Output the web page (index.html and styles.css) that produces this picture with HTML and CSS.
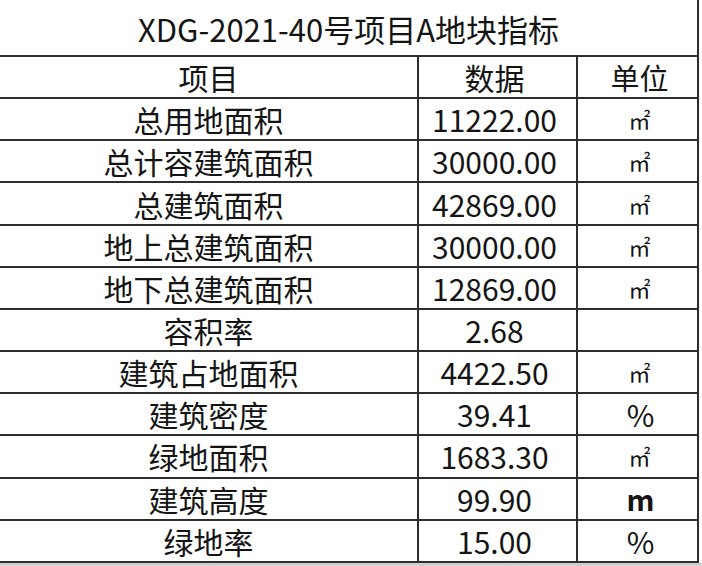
FILE: index.html
```html
<!DOCTYPE html>
<html lang="zh-CN">
<head>
<meta charset="utf-8">
<title>XDG-2021-40号项目A地块指标</title>
<link rel="stylesheet" href="styles.css">
</head>
<body>
<div class="sheet">
  <div class="cell title">XDG-2021-40号项目A地块指标</div>

  <div class="cell label">项目</div>
  <div class="cell num head">数据</div>
  <div class="cell unit head">单位</div>

  <div class="cell label">总用地面积</div>
  <div class="cell num">11222.00</div>
  <div class="cell unit"><span class="sqm">㎡</span></div>

  <div class="cell label">总计容建筑面积</div>
  <div class="cell num">30000.00</div>
  <div class="cell unit"><span class="sqm">㎡</span></div>

  <div class="cell label">总建筑面积</div>
  <div class="cell num">42869.00</div>
  <div class="cell unit"><span class="sqm">㎡</span></div>

  <div class="cell label">地上总建筑面积</div>
  <div class="cell num">30000.00</div>
  <div class="cell unit"><span class="sqm">㎡</span></div>

  <div class="cell label">地下总建筑面积</div>
  <div class="cell num">12869.00</div>
  <div class="cell unit"><span class="sqm">㎡</span></div>

  <div class="cell label">容积率</div>
  <div class="cell num">2.68</div>
  <div class="cell unit"></div>

  <div class="cell label">建筑占地面积</div>
  <div class="cell num">4422.50</div>
  <div class="cell unit"><span class="sqm">㎡</span></div>

  <div class="cell label">建筑密度</div>
  <div class="cell num">39.41</div>
  <div class="cell unit pct">%</div>

  <div class="cell label">绿地面积</div>
  <div class="cell num">1683.30</div>
  <div class="cell unit"><span class="sqm">㎡</span></div>

  <div class="cell label">建筑高度</div>
  <div class="cell num">99.90</div>
  <div class="cell unit bold">m</div>

  <div class="cell label">绿地率</div>
  <div class="cell num">15.00</div>
  <div class="cell unit pct">%</div>
</div>
<div class="strip"></div>
</body>
</html>
```

FILE: styles.css
```css
html, body {
  margin: 0;
  padding: 0;
  background: #ffffff;
}

body {
  width: 702px;
  height: 566px;
  overflow: hidden;
  font-family: "Noto Sans CJK SC", "Noto Sans", sans-serif;
  color: #141414;
}

.sheet {
  display: grid;
  grid-template-columns: 419px 159px 121px;
  grid-template-rows: 57px repeat(12, 42.17px);
  width: 699px;
}

.cell {
  display: flex;
  align-items: center;
  justify-content: center;
  border-bottom: 2px solid #2e2e2e;
  border-right: 2px solid #2e2e2e;
  font-size: 30px;
  line-height: 1;
  white-space: nowrap;
}

.title {
  grid-column: 1 / 4;
  font-size: 31px;
  padding-top: 2px;
}

.label {
  font-size: 30px;
}

.num {
  font-size: 30px;
  padding-right: 6px;
}

.unit {
  font-size: 29px;
  padding-left: 4px;
}

.pct {
  font-size: 30px;
  padding-left: 6px;
}

.sqm {
  font-size: 22px;
}

.bold {
  font-weight: 700;
  padding-left: 6px;
}

.strip {
  height: 3px;
  background: #cfcfcf;
}
```
